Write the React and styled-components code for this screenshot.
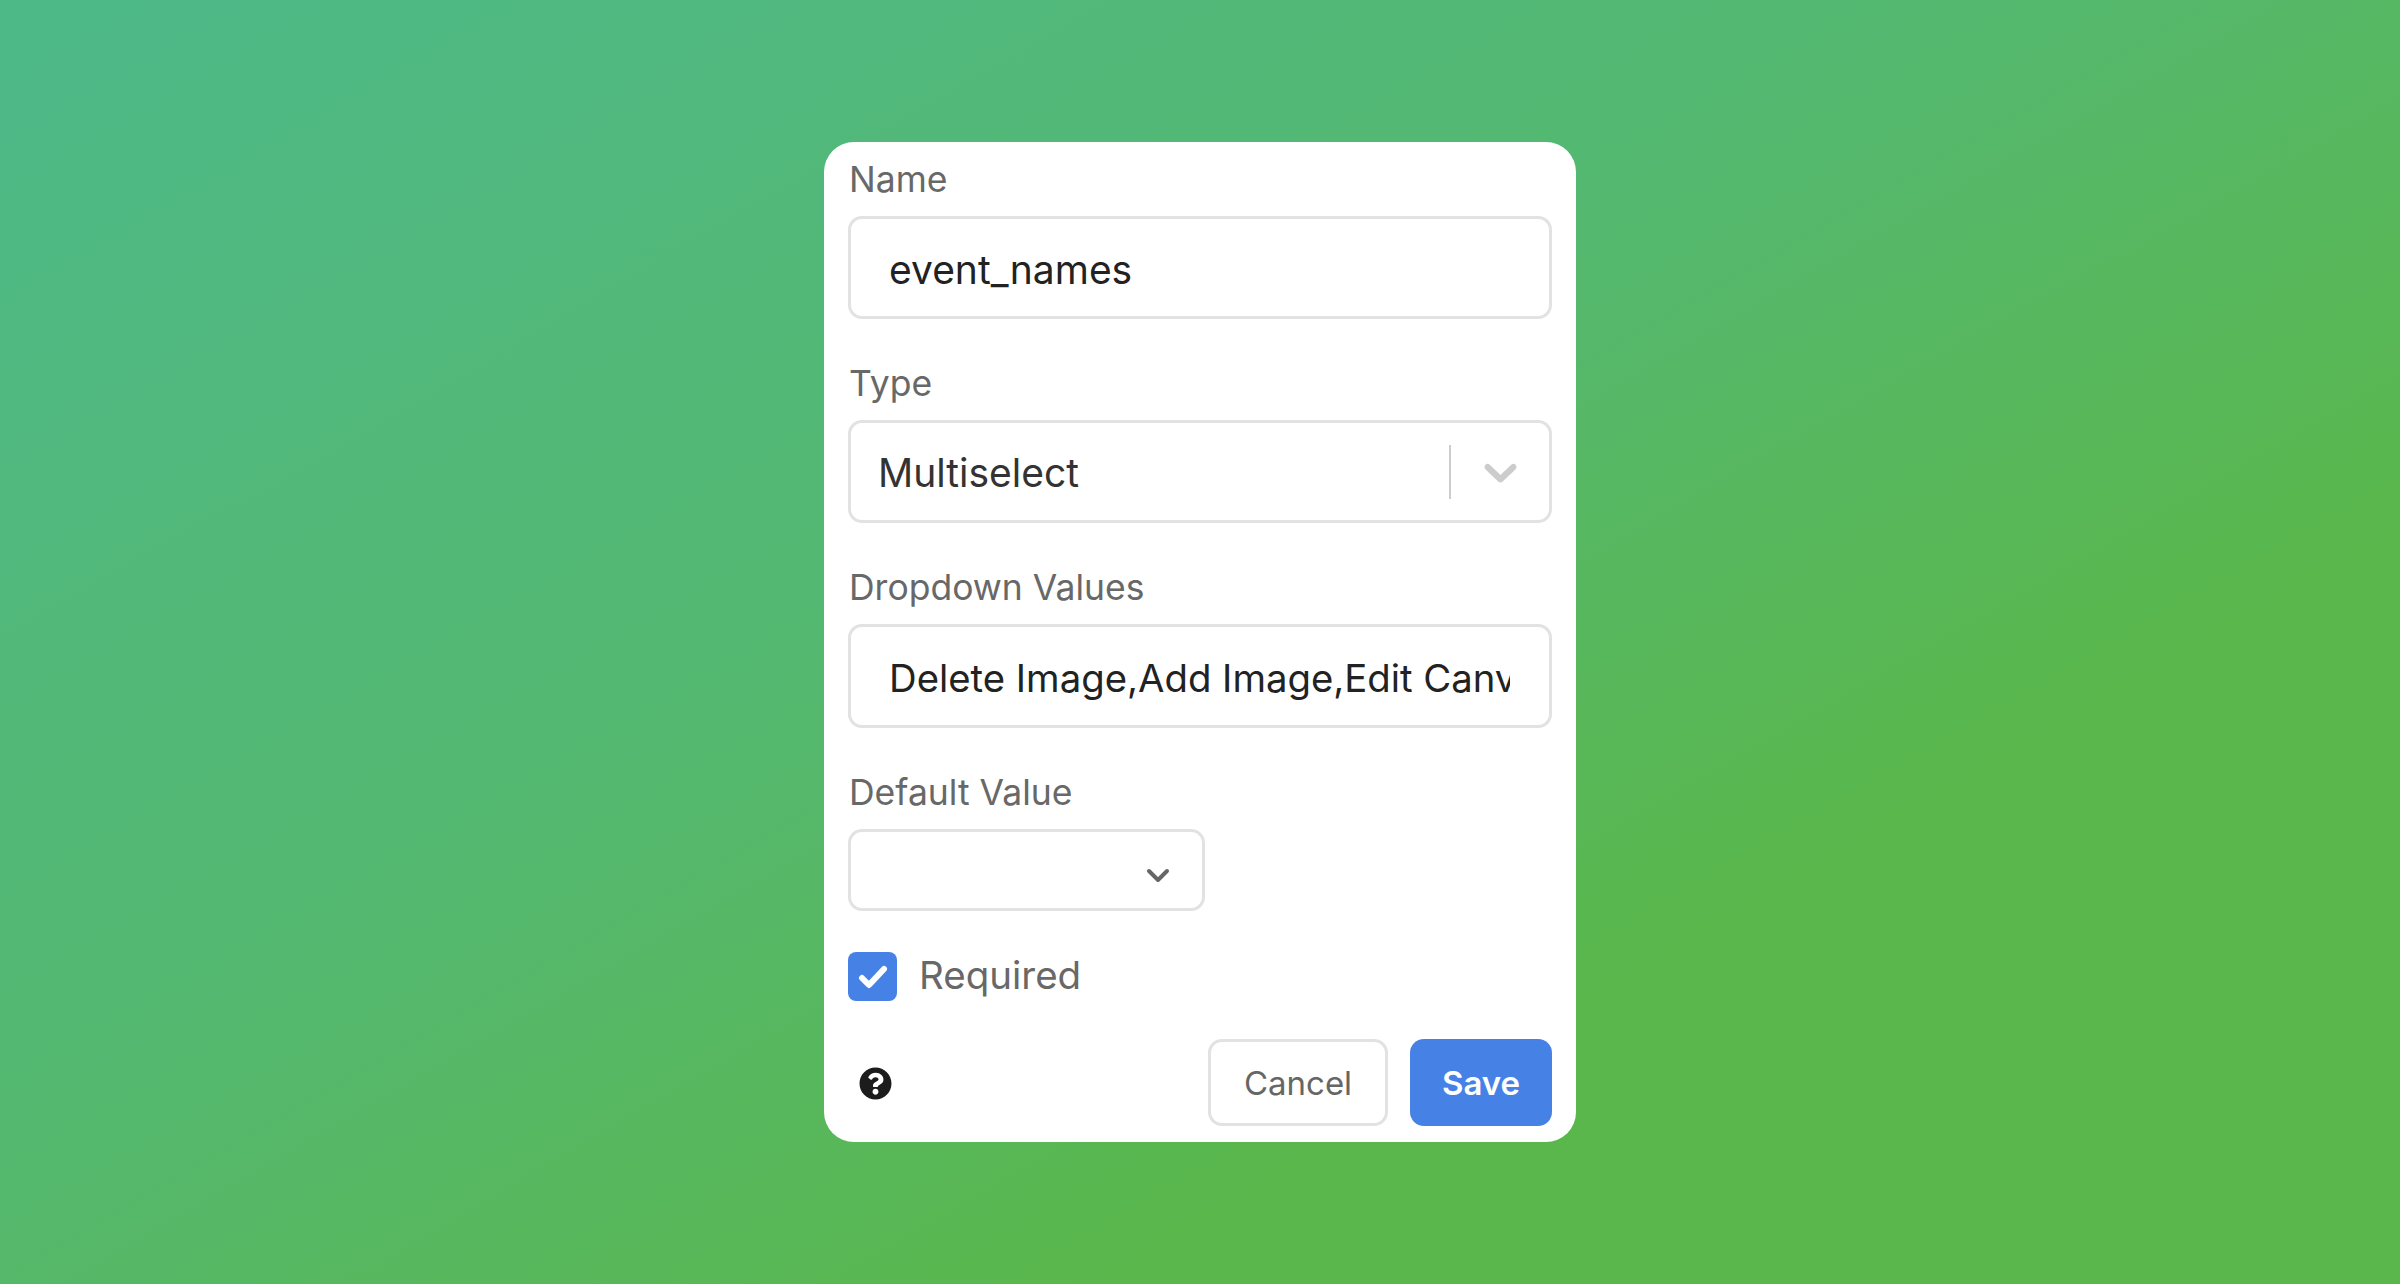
import React from 'react'
import styled, { createGlobalStyle } from 'styled-components'
import { FaQuestionCircle } from 'react-icons/fa'

const GlobalStyle = createGlobalStyle`
  html, body {
    margin: 0;
    padding: 0;
    height: 100%;
  }
  body {
    font-family: Inter, "Liberation Sans", sans-serif;
  }
  #root {
    height: 100%;
  }
`

const Page = styled.div`
  box-sizing: border-box;
  width: 100%;
  height: 1284px;
  padding-top: 142px;
  display: flex;
  justify-content: center;
  overflow: hidden;
  background: linear-gradient(150deg, #4db988 0%, #54b870 42%, #5ab74c 72%, #5ab74c 100%);
`

const Card = styled.div`
  box-sizing: border-box;
  width: 752px;
  height: 1000px;
  padding: 12px 24px 17px;
  background: #fff;
  border-radius: 30px;
  display: flex;
  flex-direction: column;
`

const Field = styled.div`
  margin-bottom: ${({ $gap }) => $gap || 39}px;
`

const Label = styled.div`
  height: 48px;
  line-height: 51px;
  margin-bottom: 14px;
  padding-left: 1px;
  font-size: 35.5px;
  color: #686868;
`

const Box = styled.div`
  box-sizing: border-box;
  width: ${({ $w }) => $w || 704}px;
  height: ${({ $h }) => $h || 103}px;
  border: 3px solid #e2e2e2;
  border-radius: 14px;
  display: flex;
  align-items: center;
  background: #fff;
`

const InputText = styled.div`
  flex: 1;
  margin: 0 39px 0 38px;
  padding-top: 3px;
  overflow: hidden;
  white-space: nowrap;
  font-size: ${({ $size }) => $size || 39}px;
  color: #222;
`

const SelectText = styled.div`
  flex: 1;
  padding: 2px 0 0 27px;
  font-size: 39px;
  color: #333;
`

const Divider = styled.div`
  width: 2px;
  height: 54px;
  background: #ccc;
`

const Chevron = styled.svg`
  width: 55px;
  height: 55px;
  margin: 0 21px 0 22px;
  fill: #ccc;
`

const SmallChevron = styled.svg`
  width: 24px;
  height: 15px;
  margin: 10px 32px 0 auto;
  fill: none;
  stroke: #666;
  stroke-width: 4;
  stroke-linecap: round;
  stroke-linejoin: round;
`

const CheckRow = styled.div`
  display: flex;
  align-items: center;
  gap: 22px;
  height: 49px;
  margin-bottom: 38px;
`

const CheckBox = styled.div`
  width: 49px;
  height: 49px;
  border-radius: 8px;
  background: #4682e6;
  display: flex;
  align-items: center;
  justify-content: center;
`

const CheckMark = styled.svg`
  width: 30px;
  height: 26px;
  fill: none;
  stroke: #fff;
  stroke-width: 6;
  stroke-linecap: round;
  stroke-linejoin: round;
`

const CheckLabel = styled.div`
  margin-top: -3px;
  font-size: 38.5px;
  color: #686868;
`

const Footer = styled.div`
  display: flex;
  align-items: center;
  gap: 22px;
`

const Help = styled.div`
  margin: 2px auto 0 11px;
  display: flex;
  font-size: 33px;
  color: #1c1c1c;
`

const Button = styled.div`
  box-sizing: border-box;
  width: ${({ $w }) => $w}px;
  height: 87px;
  border-radius: 14px;
  display: flex;
  align-items: center;
  justify-content: center;
  font-size: 33px;
  font-weight: ${({ $primary }) => ($primary ? 600 : 400)};
  color: ${({ $primary }) => ($primary ? '#fff' : '#666')};
  background: ${({ $primary }) => ($primary ? '#4682e6' : '#fff')};
  border: ${({ $primary }) => ($primary ? 'none' : '3px solid #e2e2e2')};
`

export default function App() {
  return (
    <Page>
      <GlobalStyle />
      <Card>
        <Field>
          <Label>Name</Label>
          <Box>
            <InputText>event_names</InputText>
          </Box>
        </Field>
        <Field>
          <Label>Type</Label>
          <Box>
            <SelectText>Multiselect</SelectText>
            <Divider />
            <Chevron viewBox="0 0 20 20">
              <path d="M4.516 7.548c0.436-0.446 1.043-0.481 1.576 0l3.908 3.747 3.908-3.747c0.533-0.481 1.141-0.446 1.576 0 0.436 0.445 0.408 1.197 0 1.615-0.406 0.418-4.695 4.502-4.695 4.502-0.217 0.223-0.502 0.335-0.789 0.335s-0.572-0.112-0.79-0.335c0 0-4.287-4.084-4.695-4.502s-0.436-1.17 0-1.615z" />
            </Chevron>
          </Box>
        </Field>
        <Field $gap={39}>
          <Label>Dropdown Values</Label>
          <Box $h={104}>
            <InputText $size={38.3}>Delete Image,Add Image,Edit Canvas</InputText>
          </Box>
        </Field>
        <Field $gap={41}>
          <Label>Default Value</Label>
          <Box $w={357} $h={82}>
            <SmallChevron viewBox="0 0 24 15">
              <path d="M3 3l9 9 9-9" />
            </SmallChevron>
          </Box>
        </Field>
        <CheckRow>
          <CheckBox>
            <CheckMark viewBox="0 0 30 26">
              <path d="M4 14l7 7L26 5" />
            </CheckMark>
          </CheckBox>
          <CheckLabel>Required</CheckLabel>
        </CheckRow>
        <Footer>
          <Help>
            <FaQuestionCircle />
          </Help>
          <Button $w={180}>Cancel</Button>
          <Button $w={142} $primary>Save</Button>
        </Footer>
      </Card>
    </Page>
  )
}
